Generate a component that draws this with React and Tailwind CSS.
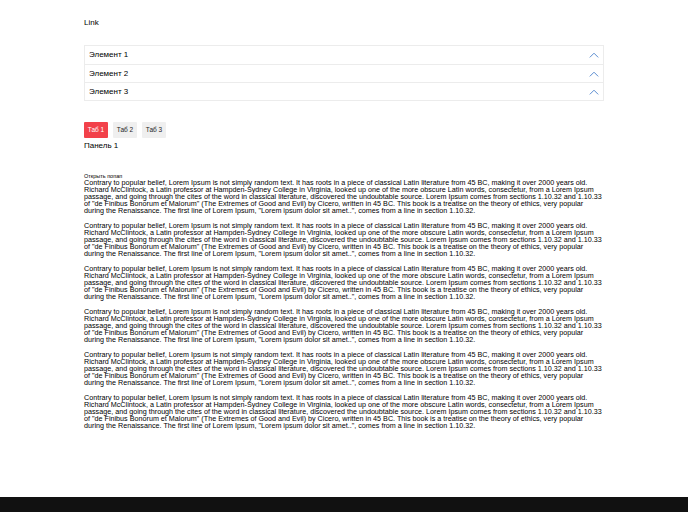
import React, { useState } from 'react';

const LOREM =
    'Contrary to popular belief, Lorem Ipsum is not simply random text. It has roots in a piece of classical Latin literature from 45 BC, making it over 2000 years old. Richard McClintock, a Latin professor at Hampden-Sydney College in Virginia, looked up one of the more obscure Latin words, consectetur, from a Lorem Ipsum passage, and going through the cites of the word in classical literature, discovered the undoubtable source. Lorem Ipsum comes from sections 1.10.32 and 1.10.33 of "de Finibus Bonorum et Malorum" (The Extremes of Good and Evil) by Cicero, written in 45 BC. This book is a treatise on the theory of ethics, very popular during the Renaissance. The first line of Lorem Ipsum, "Lorem ipsum dolor sit amet..", comes from a line in section 1.10.32.';

function Chevron() {
    return (
        <svg width="10" height="6" viewBox="0 0 10 6" fill="none" className="text-[#5b8dd0]">
            <path d="M0.8 5.4L5 1.2L9.2 5.4" stroke="currentColor" strokeWidth="1" />
        </svg>
    );
}

export default function App() {
    const [tab, setTab] = useState(0);
    const items = ['Элемент 1', 'Элемент 2', 'Элемент 3'];
    const tabs = ['Таб 1', 'Таб 2', 'Таб 3'];

    return (
        <div className="flex min-h-screen flex-col bg-white font-['Liberation_Sans',Arial,sans-serif] text-black">
            <main className="flex-1">
                <div className="mx-auto w-[520px] pt-[18px]">
                    <a href="#" className="block text-[8px] leading-[10px] text-black">
                        Link
                    </a>

                    <div className="mt-[17px] border border-[#ececec]">
                        {items.map((label, i) => (
                            <div
                                key={label}
                                className={`flex h-[18px] items-center justify-between pl-[4px] pr-[4px] text-[8px] ${i > 0 ? 'border-t border-[#ececec]' : ''}`}
                            >
                                <span>{label}</span>
                                <Chevron />
                            </div>
                        ))}
                    </div>

                    <div className="mt-[21px] flex gap-[5px]">
                        {tabs.map((t, i) => (
                            <button
                                key={t}
                                type="button"
                                onClick={() => setTab(i)}
                                className={`h-[16px] w-[24px] rounded-[1px] text-[6.5px] ${tab === i ? 'bg-[#f2414a] text-white' : 'bg-[#efefef] text-[#222]'}`}
                            >
                                {t}
                            </button>
                        ))}
                    </div>
                    <div className="mt-[3px] text-[8px] leading-[10px]">Панель {tab + 1}</div>

                    <div className="mt-[22px] text-[5.5px] leading-[6px]">Открыть попап</div>
                    <div className="flex flex-col gap-[7.5px] text-[7.2px] leading-[7.1px]">
                        {[0, 1, 2, 3, 4, 5].map((n) => (
                            <p key={n}>{LOREM}</p>
                        ))}
                    </div>
                </div>
            </main>
            <footer className="h-[15px] bg-[#111]" />
        </div>
    );
}
